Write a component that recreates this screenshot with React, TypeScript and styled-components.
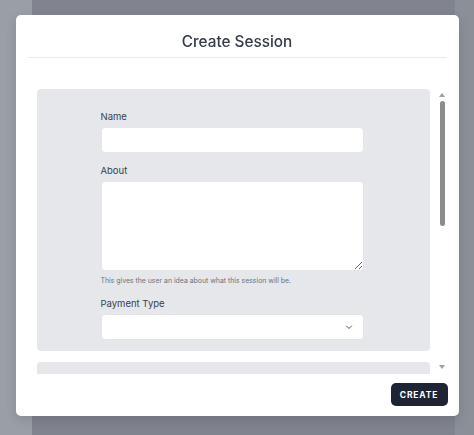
import React from 'react';
import styled, { createGlobalStyle } from 'styled-components';

const GlobalStyle = createGlobalStyle`
  html, body {
    margin: 0;
    padding: 0;
    height: 100%;
    font-family: 'Inter', 'Noto Sans', sans-serif;
  }
  #root {
    height: 100%;
  }
`;

const Page = styled.div`
  height: 100%;
  display: grid;
  grid-template-columns: 32px 1fr 19px;
  background: #9a9ea6;
`;

const PageCard = styled.div`
  grid-column: 2;
  background: #80848e;
`;

const PageEdge = styled.div`
  grid-column: 3;
  background: #8b8f98;
`;

const Overlay = styled.div`
  position: fixed;
  inset: 0;
  display: flex;
  justify-content: center;
  align-items: flex-start;
  padding-top: 15px;
`;

const Modal = styled.div`
  width: 443px;
  background: #ffffff;
  border-radius: 5px;
  box-shadow: 0 4px 12px rgba(0, 0, 0, 0.12);
  display: flex;
  flex-direction: column;
`;

const Header = styled.div`
  margin: 0 12px;
  height: 42px;
  border-bottom: 1px solid #e8eaee;
  display: flex;
  justify-content: center;
  align-items: flex-start;
`;

const Title = styled.h2`
  margin: 17px 0 0;
  font-size: 15.3px;
  font-weight: 500;
  line-height: 20px;
  color: #343a46;
`;

const Body = styled.div`
  margin-top: 30px;
  height: 286px;
  display: flex;
  padding: 0 9px 0 21px;
`;

const Viewport = styled.div`
  flex: 1;
  overflow: hidden;
  padding-top: 1px;
  display: flex;
  flex-direction: column;
  gap: 11px;
  padding-right: 5px;
`;

const Section = styled.div<{ $height?: number }>`
  flex-shrink: 0;
  background: #e5e7eb;
  border-radius: 4px;
  padding: 21px 0 11px;
  display: flex;
  justify-content: center;
  ${(p) => (p.$height ? `height: ${p.$height}px;` : '')}
`;

const Form = styled.div`
  width: 263px;
  margin-left: -2px;
  display: flex;
  flex-direction: column;
`;

const Label = styled.label<{ $top?: number }>`
  font-size: 9.5px;
  line-height: 14px;
  color: #374151;
  margin-top: ${(p) => p.$top ?? 0}px;
  margin-bottom: 3px;
`;

const fieldBase = `
  box-sizing: border-box;
  width: 100%;
  background: #ffffff;
  border: 1px solid #e3e5e9;
  border-radius: 4px;
  font-family: inherit;
  outline: none;
`;

const TextInput = styled.input`
  ${fieldBase}
  height: 26px;
`;

const TextArea = styled.textarea`
  ${fieldBase}
  height: 90px;
  display: block;
  resize: vertical;
`;

const Help = styled.p`
  margin: 5px 0 0;
  font-size: 6.9px;
  line-height: 10px;
  color: #6b7280;
`;

const SelectBox = styled.div`
  ${fieldBase}
  height: 26px;
  display: flex;
  align-items: center;
  justify-content: flex-end;
  padding-right: 9px;
`;

const ScrollTrack = styled.div`
  width: 15px;
  display: flex;
  flex-direction: column;
  align-items: center;
  padding: 5px 0;
`;

const ScrollArrow = styled.div<{ $down?: boolean }>`
  width: 0;
  height: 0;
  border-left: 3px solid transparent;
  border-right: 3px solid transparent;
  ${(p) =>
    p.$down
      ? 'border-top: 4px solid #9ca0a6;'
      : 'border-bottom: 4px solid #9ca0a6;'}
`;

const ScrollThumb = styled.div`
  width: 5px;
  height: 125px;
  margin-top: 4px;
  border-radius: 3px;
  background: #8c8c8c;
`;

const Spacer = styled.div`
  flex: 1;
`;

const Footer = styled.div`
  padding: 9px 11px 10px;
  display: flex;
  justify-content: flex-end;
`;

const Button = styled.button`
  height: 23px;
  width: 57px;
  border: none;
  border-radius: 5px;
  background: #1e2433;
  color: #ffffff;
  font-family: inherit;
  font-size: 8.5px;
  font-weight: 700;
  letter-spacing: 0.8px;
  cursor: pointer;
`;

function Chevron() {
  return (
    <svg width="10" height="10" viewBox="0 0 20 20" fill="none">
      <path
        d="M5 8l5 5 5-5"
        stroke="#4b5563"
        strokeWidth="2"
        strokeLinecap="round"
        strokeLinejoin="round"
      />
    </svg>
  );
}

export default function App() {
  return (
    <>
      <GlobalStyle />
      <Page>
        <PageCard />
        <PageEdge />
      </Page>
      <Overlay>
        <Modal>
          <Header>
            <Title>Create Session</Title>
          </Header>
          <Body>
            <Viewport>
              <Section>
                <Form>
                  <Label>Name</Label>
                  <TextInput />
                  <Label $top={11}>About</Label>
                  <TextArea />
                  <Help>This gives the user an idea about what this session will be.</Help>
                  <Label $top={11}>Payment Type</Label>
                  <SelectBox>
                    <Chevron />
                  </SelectBox>
                </Form>
              </Section>
              <Section $height={40} />
            </Viewport>
            <ScrollTrack>
              <ScrollArrow />
              <ScrollThumb />
              <Spacer />
              <ScrollArrow $down />
            </ScrollTrack>
          </Body>
          <Footer>
            <Button>CREATE</Button>
          </Footer>
        </Modal>
      </Overlay>
    </>
  );
}
